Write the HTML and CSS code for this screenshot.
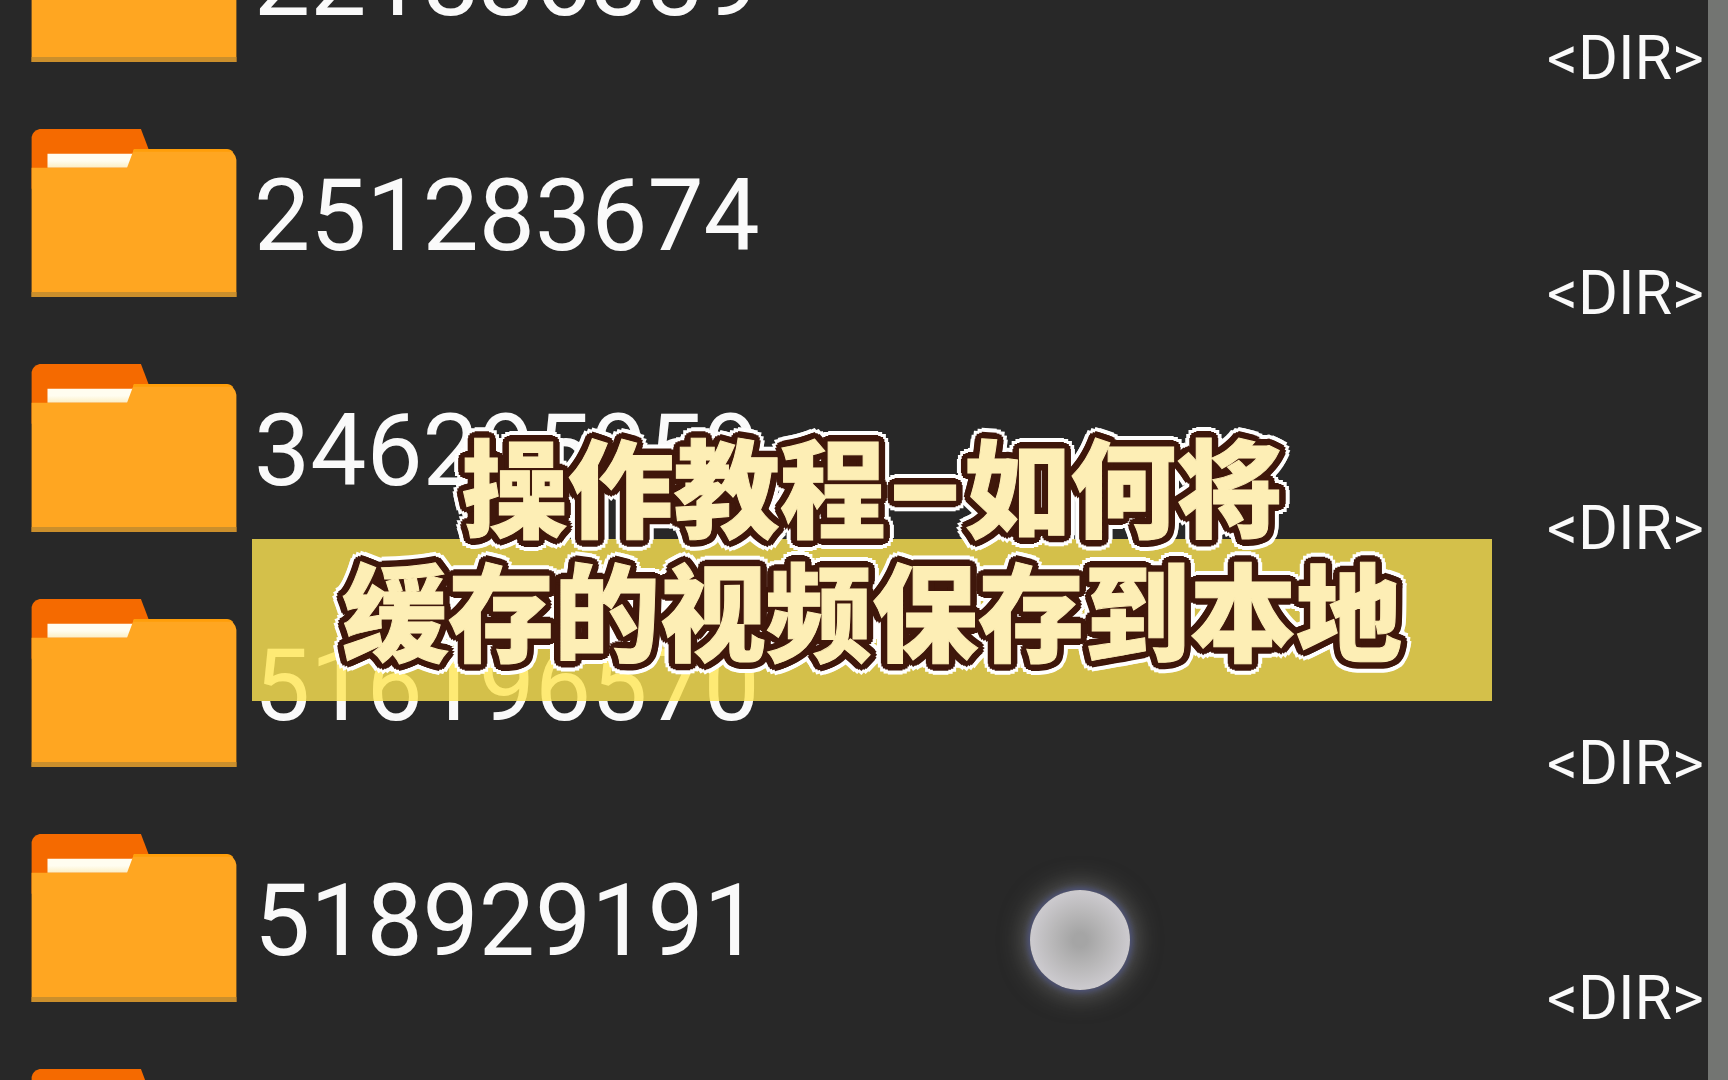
FILE: index.html
```
<!DOCTYPE html>
<html lang="zh-CN">
<head>
    <meta charset="UTF-8">
    <meta name="viewport" content="width=device-width, initial-scale=1.0">
    <title>操作教程-如何将缓存的视频保存到本地</title>
    <link rel="stylesheet" href="styles.css">
</head>
<body>
    <svg class="sprite" aria-hidden="true">
        <defs>
            <linearGradient id="paper" x1="0" y1="0" x2="0" y2="1">
                <stop offset="0.5" stop-color="#fffdf0"/>
                <stop offset="1" stop-color="#fbeec4"/>
            </linearGradient>
        </defs>
        <symbol id="folder" viewBox="0 0 206 169">
            <path fill="#f56a00" d="M0 60V8Q1 2 8 0H110L119 24V60Z"/>
            <path fill="url(#paper)" d="M16 25H104L98 39H16Z"/>
            <path fill="#ffa621" d="M0 39H96L103 20H196Q204 21 206 31V169H0Z"/>
            <path fill="#ff9e0a" d="M103 20H196Q200 20 203 23H102Z"/>
            <path fill="#cb8f2c" d="M0 164H206V169H0Z"/>
        </symbol>
    </svg>

    <main class="screen">
        <ul class="file-list">
            <li class="file-item">
                <svg class="folder-icon" aria-hidden="true"><use href="#folder"/></svg>
                <span class="file-name">221836339</span>
                <span class="file-type">&lt;DIR&gt;</span>
            </li>
            <li class="file-item">
                <svg class="folder-icon" aria-hidden="true"><use href="#folder"/></svg>
                <span class="file-name">251283674</span>
                <span class="file-type">&lt;DIR&gt;</span>
            </li>
            <li class="file-item">
                <svg class="folder-icon" aria-hidden="true"><use href="#folder"/></svg>
                <span class="file-name">346295959</span>
                <span class="file-type">&lt;DIR&gt;</span>
            </li>
            <li class="file-item">
                <svg class="folder-icon" aria-hidden="true"><use href="#folder"/></svg>
                <span class="file-name">516196570</span>
                <span class="file-type">&lt;DIR&gt;</span>
            </li>
            <li class="file-item">
                <svg class="folder-icon" aria-hidden="true"><use href="#folder"/></svg>
                <span class="file-name">518929191</span>
                <span class="file-type">&lt;DIR&gt;</span>
            </li>
            <li class="file-item">
                <svg class="folder-icon" aria-hidden="true"><use href="#folder"/></svg>
            </li>
        </ul>
        <div class="scrollbar"></div>
    </main>

    <div class="touch-dot"></div>

    <div class="caption">
        <h1 class="caption-title">
            <span class="line">
                <span class="outlined" data-text="操作教程">操作教程</span>
                <span class="outlined dash" data-text="–">–</span>
                <span class="outlined" data-text="如何将">如何将</span>
            </span>
            <span class="line">
                <span class="outlined" data-text="缓存的视频保存到本地">缓存的视频保存到本地</span>
            </span>
        </h1>
    </div>
</body>
</html>
```
FILE: styles.css
```
* {
    box-sizing: border-box;
}

body {
    margin: 0;
    height: 100vh;
    position: relative;
    overflow: hidden;
    background-color: #282828;
    color: #fafafa;
    font-family: Roboto, sans-serif;
}

.sprite {
    position: absolute;
    width: 0;
    height: 0;
}

.screen {
    display: flex;
    height: 100%;
    overflow: hidden;
}

/* the list is scrolled partway through its first row */
.file-list {
    flex: 1;
    margin: -137px 0 0;
    padding: 0;
    list-style: none;
}

.file-item {
    display: flex;
    align-items: flex-start;
    height: 235px;
    padding: 31px 4px 4px 31px;
}

.folder-icon {
    flex: none;
    width: 206px;
    height: 168px;
}

.file-name {
    flex: 1;
    margin: 29px 0 0 17px;
    font-size: 100px;
    line-height: 116px;
}

.file-type {
    align-self: flex-end;
    font-size: 61px;
    line-height: 72px;
}

.scrollbar {
    width: 20px;
    background-color: #737572;
}

.touch-dot {
    position: absolute;
    left: 1030px;
    top: 890px;
    width: 100px;
    height: 100px;
    border-radius: 50%;
    background: radial-gradient(circle, #a5a5a5 10%, #b9b8b9 40%, #cbc9cd 68%);
    box-shadow: 0 0 6px 2px #4d5380, 0 0 24px 6px rgba(150, 150, 145, 0.5);
}

.caption {
    position: absolute;
    top: 539px;
    left: 252px;
    right: 236px;
    padding-bottom: 32px;
    background-color: rgba(255, 230, 82, 0.8);
}

.caption-title {
    position: relative;
    z-index: 0;
    margin: -118px 0 0;
    color: #fdeeb5;
    font-family: "Noto Sans CJK SC", sans-serif;
    font-size: 106px;
    font-weight: 900;
    line-height: 124px;
    white-space: nowrap;
}

.line {
    display: flex;
    justify-content: center;
    height: 124px;
}

.outlined {
    position: relative;
    -webkit-text-stroke: 1px #fdeeb5;
}

.dash {
    padding: 0 2px;
    font-size: 136px;
    line-height: 104px;
}

/* two round outlines behind the letters: brown, then white */
.outlined::before,
.outlined::after {
    content: attr(data-text);
    position: absolute;
    inset: 0;
    padding: inherit;
    color: var(--outline);
    -webkit-text-stroke: 1px var(--outline);
    text-shadow:
        var(--r) 0 var(--outline),
        calc(var(--r) * 0.92) calc(var(--r) * 0.38) var(--outline),
        calc(var(--r) * 0.71) calc(var(--r) * 0.71) var(--outline),
        calc(var(--r) * 0.38) calc(var(--r) * 0.92) var(--outline),
        0 var(--r) var(--outline),
        calc(var(--r) * -0.38) calc(var(--r) * 0.92) var(--outline),
        calc(var(--r) * -0.71) calc(var(--r) * 0.71) var(--outline),
        calc(var(--r) * -0.92) calc(var(--r) * 0.38) var(--outline),
        calc(var(--r) * -1) 0 var(--outline),
        calc(var(--r) * -0.92) calc(var(--r) * -0.38) var(--outline),
        calc(var(--r) * -0.71) calc(var(--r) * -0.71) var(--outline),
        calc(var(--r) * -0.38) calc(var(--r) * -0.92) var(--outline),
        0 calc(var(--r) * -1) var(--outline),
        calc(var(--r) * 0.38) calc(var(--r) * -0.92) var(--outline),
        calc(var(--r) * 0.71) calc(var(--r) * -0.71) var(--outline),
        calc(var(--r) * 0.92) calc(var(--r) * -0.38) var(--outline);
}

.outlined::before {
    --outline: #3f170b;
    --r: 7px;
    z-index: -1;
}

.outlined::after {
    --outline: #fff;
    --r: 11px;
    z-index: -2;
}
```
